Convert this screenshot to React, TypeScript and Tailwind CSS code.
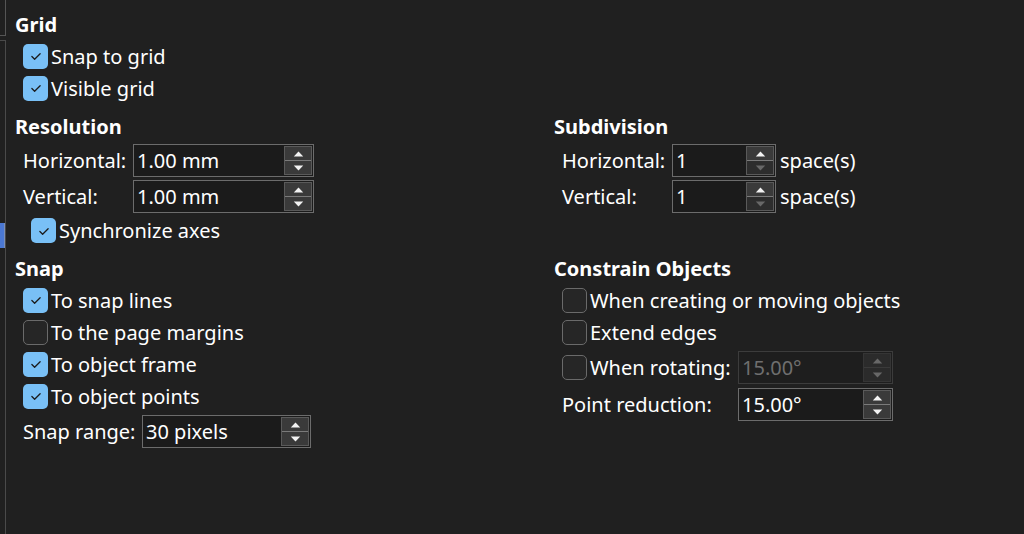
import type { ReactNode } from "react";

// Dark settings pane: grid / snap options.

function Check({ checked, label, className = "" }: { checked: boolean; label: string; className?: string }) {
  return (
    <div className={`flex h-8 items-center ${className}`}>
      <span
        className={`flex h-[25px] w-[25px] shrink-0 items-center justify-center rounded-[5px] ${
          checked ? "bg-[#79c0f6]" : "border border-[#6a6a6a] bg-[#262626]"
        }`}
      >
        {checked && (
          <svg viewBox="0 0 24 24" className="h-[22px] w-[22px]" fill="none">
            <path d="M7.5 12.5l3 3 6-6" stroke="#1b1b1b" strokeWidth="1.4" strokeLinecap="round" strokeLinejoin="round" />
          </svg>
        )}
      </span>
      <span className="ml-[3px] whitespace-nowrap">{label}</span>
    </div>
  );
}

function Arrow({ up, dim }: { up?: boolean; dim?: boolean }) {
  return (
    <svg viewBox="0 0 12 7" className="h-[6px] w-[11px]">
      <path d={up ? "M6 0.5L11.5 6.5H0.5Z" : "M0.5 0.5H11.5L6 6.5Z"} fill={dim ? "#686868" : "#f2f2f2"} />
    </svg>
  );
}

function Spin({
  value,
  width,
  disabled,
  downDisabled,
}: {
  value: string;
  width: string;
  disabled?: boolean;
  downDisabled?: boolean;
}) {
  return (
    <div
      className={`flex h-[33px] shrink-0 border ${width} ${
        disabled ? "border-[#3c3c3c] bg-[#1e1e1e]" : "border-[#6c6c6c] bg-[#1b1b1b]"
      }`}
    >
      <div className={`flex flex-1 items-center pl-[3px] ${disabled ? "text-[#6f6f6f]" : ""}`}>{value}</div>
      <div
        className={`m-[1px] flex w-[28px] flex-col border ${
          disabled ? "border-[#353535] bg-[#2b2b2b]" : "border-[#5a5a5a] bg-[#3a3a3a]"
        }`}
      >
        <div className="flex flex-1 items-center justify-center">
          <Arrow up dim={disabled} />
        </div>
        <div className={`h-px ${disabled ? "bg-[#3a3a3a]" : "bg-[#7a7a7a]"}`} />
        <div
          className={`flex flex-1 items-center justify-center ${downDisabled ? "bg-[#2d2d2d]" : ""}`}
        >
          <Arrow dim={disabled || downDisabled} />
        </div>
      </div>
    </div>
  );
}

function Header({ children }: { children: ReactNode }) {
  return <div className="flex h-8 items-center font-bold">{children}</div>;
}

function Row({ label, labelW, children }: { label: string; labelW: string; children: ReactNode }) {
  return (
    <div className="flex items-center">
      <span className={`shrink-0 whitespace-nowrap ${labelW}`}>{label}</span>
      {children}
    </div>
  );
}

export default function App() {
  return (
    <div
      className="flex h-[534px] w-[1024px] overflow-hidden bg-[#202020] text-[20px] leading-[27px] text-white"
      style={{ fontFamily: '"Noto Sans", "Open Sans", sans-serif' }}
    >
      {/* clipped list on the left */}
      <div className="flex w-[6px] shrink-0 flex-col">
        <div className="h-[36px] border-r border-b border-[#555]" />
        <div className="mt-[4px] flex-1 border-t border-r border-[#4a4a4a]">
          <div className="mt-[182px] h-[25px] border-r border-[#7a8fb8] bg-[#4b78d3]" />
        </div>
      </div>

      <div className="flex-1 pl-[9px] pt-[8px]">
        <Header>Grid</Header>
        <div className="pl-2">
          <Check checked label="Snap to grid" />
          <Check checked label="Visible grid" />
        </div>

        <div className="mt-[6px] grid grid-cols-[539px_1fr]">
          <div>
            <Header>Resolution</Header>
            <div className="flex flex-col gap-[3px] pl-2 pt-[2px]">
              <Row label="Horizontal:" labelW="w-[110px]">
                <Spin value="1.00 mm" width="w-[181px]" />
              </Row>
              <Row label="Vertical:" labelW="w-[110px]">
                <Spin value="1.00 mm" width="w-[181px]" />
              </Row>
            </div>
            <Check checked label="Synchronize axes" className="pl-4 pt-[3px]" />
          </div>
          <div>
            <Header>Subdivision</Header>
            <div className="flex flex-col gap-[3px] pl-2 pt-[2px]">
              <Row label="Horizontal:" labelW="w-[110px]">
                <Spin value="1" width="w-[104px]" downDisabled />
                <span className="ml-[4px]">space(s)</span>
              </Row>
              <Row label="Vertical:" labelW="w-[110px]">
                <Spin value="1" width="w-[104px]" downDisabled />
                <span className="ml-[4px]">space(s)</span>
              </Row>
            </div>
          </div>

          <div className="mt-[7px]">
            <Header>Snap</Header>
            <div className="pl-2">
              <Check checked label="To snap lines" />
              <Check checked={false} label="To the page margins" />
              <Check checked label="To object frame" />
              <Check checked label="To object points" />
              <div className="mt-[3px]">
                <Row label="Snap range:" labelW="w-[119px]">
                  <Spin value="30 pixels" width="w-[169px]" />
                </Row>
              </div>
            </div>
          </div>
          <div className="mt-[7px]">
            <Header>Constrain Objects</Header>
            <div className="pl-2">
              <Check checked={false} label="When creating or moving objects" />
              <Check checked={false} label="Extend edges" />
              <div className="mt-[3px] flex items-center">
                <div className="w-[176px]">
                  <Check checked={false} label="When rotating:" />
                </div>
                <Spin value="15.00°" width="w-[155px]" disabled />
              </div>
              <div className="mt-[4px]">
                <Row label="Point reduction:" labelW="w-[176px]">
                  <Spin value="15.00°" width="w-[155px]" />
                </Row>
              </div>
            </div>
          </div>
        </div>
      </div>
    </div>
  );
}
